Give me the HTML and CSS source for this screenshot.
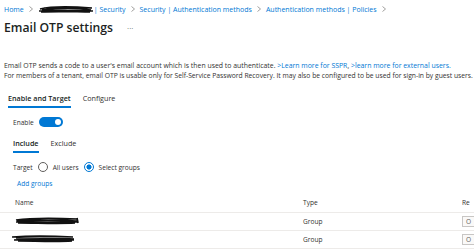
FILE: index.html
```html
<!DOCTYPE html>
<html lang="en">
<head>
  <meta charset="UTF-8">
  <title>Email OTP settings</title>
  <link rel="stylesheet" href="styles.css">
</head>
<body>

<div class="page">
  <nav class="crumbs">
    <a href="#">Home</a>
    <svg class="chev" width="4" height="6" viewBox="0 0 4 6"><path d="M0.5 0.5 L3.5 3 L0.5 5.5" fill="none" stroke="#8a8886" stroke-width="0.8"/></svg>
    <svg class="scribble crumb-scribble" width="56" height="9" viewBox="0 0 56 9">
      <path d="M2 4 C10 2 30 1 54 3 M4 5 C20 3 40 3 53 5 M1 6 C18 5 36 5 55 6 M3 7 C20 6 40 7 52 7 M6 3 C22 2 38 2 50 3" fill="none" stroke="#111" stroke-width="1.6"/>
    </svg>
    <a href="#" class="tight">| Security</a>
    <svg class="chev" width="4" height="6" viewBox="0 0 4 6"><path d="M0.5 0.5 L3.5 3 L0.5 5.5" fill="none" stroke="#8a8886" stroke-width="0.8"/></svg>
    <a href="#">Security | Authentication methods</a>
    <svg class="chev" width="4" height="6" viewBox="0 0 4 6"><path d="M0.5 0.5 L3.5 3 L0.5 5.5" fill="none" stroke="#8a8886" stroke-width="0.8"/></svg>
    <a href="#">Authentication methods | Policies</a>
    <svg class="chev" width="4" height="6" viewBox="0 0 4 6"><path d="M0.5 0.5 L3.5 3 L0.5 5.5" fill="none" stroke="#8a8886" stroke-width="0.8"/></svg>
  </nav>

  <div class="title-row">
    <h1>Email OTP settings</h1>
    <span class="more">···</span>
  </div>

  <p class="desc">
    <span class="l1">Email OTP sends a code to a user's email account which is then used to authenticate. <a href="#">&gt;Learn more for SSPR</a>, <a href="#">&gt;learn more for external users.</a></span><br>
    <span class="l2">For members of a tenant, email OTP is usable only for Self-Service Password Recovery. It may also be configured to be used for sign-in by guest users.</span>
  </p>

  <div class="tabs main-tabs">
    <div class="tab active">Enable and Target</div>
    <div class="tab">Configure</div>
  </div>

  <div class="panel">
    <div class="enable-row">
      <span>Enable</span>
      <span class="toggle"><span class="knob"></span></span>
    </div>

    <div class="tabs sub-tabs">
      <div class="tab active">Include</div>
      <div class="tab">Exclude</div>
    </div>

    <div class="target-row">
      <span>Target</span>
      <span class="radio"></span>
      <span>All users</span>
      <span class="radio checked"></span>
      <span>Select groups</span>
    </div>

    <a href="#" class="add">Add groups</a>
  </div>

  <table class="groups">
    <tr class="head">
      <td class="c-name">Name</td>
      <td class="c-type">Type</td>
      <td class="c-reg">Re</td>
    </tr>
    <tr>
      <td class="c-name">
        <svg class="scribble" width="64" height="8" viewBox="0 0 64 8">
          <path d="M1 3 C15 1 40 1 63 2 M2 4 C20 3 45 3 62 4 M1 5 C20 5 42 5 63 5 M3 6 C22 6 44 7 60 6 M62 1 L63 6" fill="none" stroke="#111" stroke-width="1.7"/>
        </svg>
      </td>
      <td class="c-type">Group</td>
      <td class="c-reg"><span class="pick">O</span></td>
    </tr>
    <tr>
      <td class="c-name">
        <svg class="scribble shift" width="64" height="8" viewBox="0 0 64 8">
          <path d="M0 2 C15 1 40 1 61 2 M4 3 C20 3 45 3 62 4 M2 5 C20 4 42 5 62 5 M6 6 C22 6 44 7 60 6" fill="none" stroke="#111" stroke-width="1.7"/>
        </svg>
      </td>
      <td class="c-type">Group</td>
      <td class="c-reg"><span class="pick">O</span></td>
    </tr>
  </table>
</div>

</body>
</html>
```

FILE: styles.css
```css
* {
  box-sizing: border-box;
}

body {
  margin: 0;
  background: #fff;
  color: #323130;
  font-family: "Open Sans", "Noto Sans", sans-serif;
  font-size: 6.6px;
  overflow: hidden;
}

a {
  color: #0078d4;
  text-decoration: none;
}

.page {
  width: 474px;
  height: 251px;
  overflow: hidden;
}

/* breadcrumb */
.crumbs {
  display: flex;
  align-items: center;
  gap: 5px;
  height: 18px;
  padding-left: 4px;
  white-space: nowrap;
  font-size: 7px;
}

.crumbs .tight {
  margin-left: -5px;
}

.scribble {
  display: block;
}

/* title */
.title-row {
  display: flex;
  align-items: center;
  gap: 14px;
  height: 19px;
  padding-left: 4px;
}

h1 {
  margin: 0;
  font-size: 12.2px;
  font-weight: 600;
  color: #201f1e;
}

.more {
  color: #605e5c;
  font-size: 8px;
}

.desc {
  margin: 24px 0 0;
  padding-left: 4px;
  line-height: 10px;
  white-space: nowrap;
}

.desc .l1 {
  font-size: 6.9px;
}

.desc .l2 {
  font-size: 6.75px;
}

/* tabs */
.tabs {
  display: flex;
  gap: 12px;
}

.tab {
  position: relative;
  font-size: 7.2px;
}

.tab.active {
  font-weight: 600;
  color: #201f1e;
}

.tab.active::after {
  content: '';
  position: absolute;
  left: 0;
  right: 0;
  bottom: 0;
  height: 2px;
  background: #0078d4;
}

.main-tabs {
  margin-top: 9px;
  padding-left: 8px;
}

.main-tabs .tab {
  height: 18px;
  line-height: 16px;
}

.panel {
  padding-left: 13px;
}

.enable-row {
  display: flex;
  align-items: center;
  gap: 5px;
  height: 14px;
  margin-top: 7px;
}

.toggle {
  display: flex;
  justify-content: flex-end;
  align-items: center;
  width: 24px;
  height: 10px;
  padding: 2px;
  border-radius: 5px;
  background: #0078d4;
}

.knob {
  width: 6px;
  height: 6px;
  border-radius: 50%;
  background: #fff;
}

.sub-tabs {
  margin-top: 7px;
}

.sub-tabs .tab {
  height: 17px;
  line-height: 15px;
}

.target-row {
  display: flex;
  align-items: center;
  gap: 5px;
  height: 14px;
  margin-top: 7px;
}

.radio {
  width: 10px;
  height: 10px;
  border: 1px solid #605e5c;
  border-radius: 50%;
}

.radio.checked {
  border-color: #0078d4;
  background: radial-gradient(circle, #0078d4 0 2.3px, #fff 2.8px);
}

.add {
  display: block;
  margin: 3px 0 0 4px;
  height: 14px;
  line-height: 14px;
}

/* table */
.groups {
  width: 474px;
  border-collapse: collapse;
  margin-top: 2px;
}

.groups td {
  padding: 0;
  border-bottom: 1px solid #edebe9;
  vertical-align: middle;
}

.groups tr {
  height: 18px;
}

.groups .head {
  height: 19px;
}

.c-name {
  width: 303px;
  padding-left: 15px !important;
}

.c-type {
  width: 159px;
}

.shift {
  margin-left: -3px;
}

.pick {
  display: block;
  width: 12px;
  height: 11px;
  line-height: 9px;
  padding-left: 3px;
  border: 1px solid #c8c6c4;
  border-right: none;
  background: #faf9f8;
  color: #605e5c;
}
```
